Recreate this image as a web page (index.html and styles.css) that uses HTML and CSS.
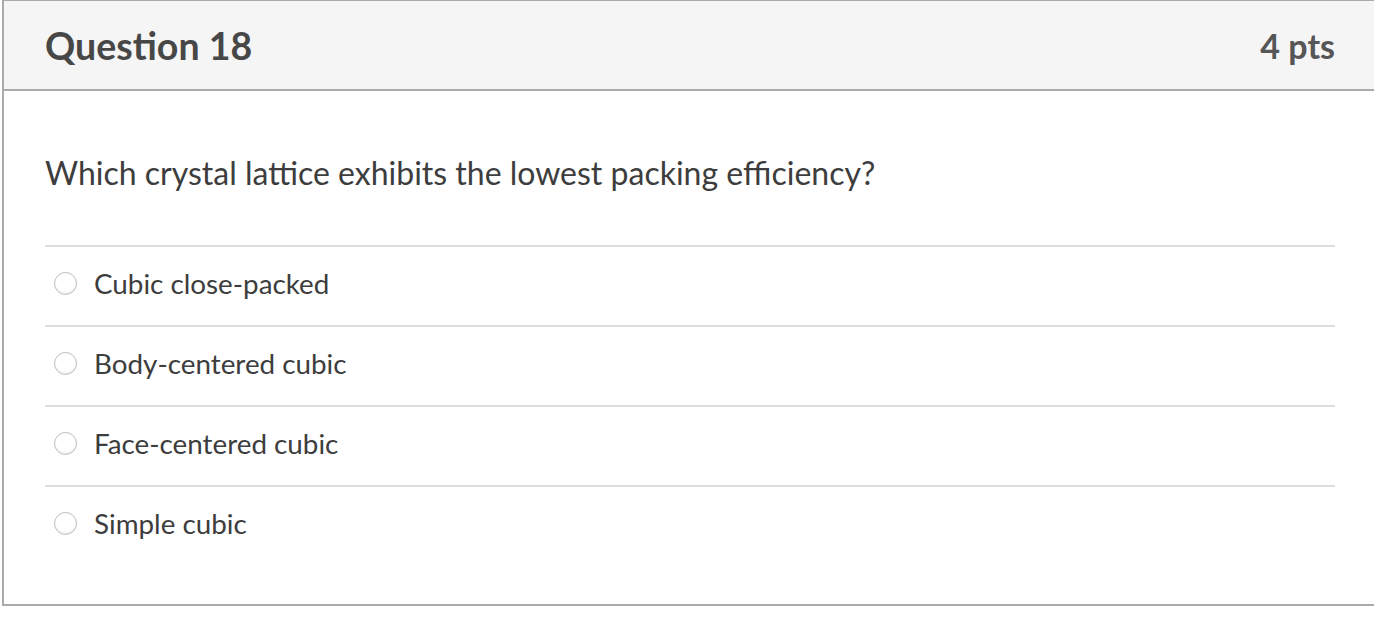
FILE: index.html
```html
<!DOCTYPE html>
<html>
<head>
<meta charset="utf-8">
<link rel="stylesheet" href="styles.css">
</head>
<body>
<div class="question">
  <div class="q-header">
    <span class="q-title">Question 18</span>
    <span class="q-points">4 pts</span>
  </div>
  <div class="q-body">
    <div class="q-text">Which crystal lattice exhibits the lowest packing efficiency?</div>
    <div class="answers">
      <label class="answer"><span class="radio"></span><span class="a-text">Cubic close-packed</span></label>
      <label class="answer"><span class="radio"></span><span class="a-text">Body-centered cubic</span></label>
      <label class="answer"><span class="radio"></span><span class="a-text">Face-centered cubic</span></label>
      <label class="answer"><span class="radio"></span><span class="a-text">Simple cubic</span></label>
    </div>
  </div>
</div>
</body>
</html>
```

FILE: styles.css
```css
html, body {
  margin: 0;
  padding: 0;
  overflow: hidden;
  background: #ffffff;
}
body {
  font-family: Lato, "Liberation Sans", sans-serif;
  color: #3d3d3d;
}
.question {
  margin-left: 2px;
  width: 1400px;
  border: 2px solid #aaaaaa;
  border-top-width: 1px;
  border-right: none;
}
.q-header {
  display: flex;
  justify-content: space-between;
  align-items: center;
  background: #f5f5f5;
  border-bottom: 2px solid #aaaaaa;
  padding: 0 43px 0 41px;
  box-sizing: border-box;
  width: 1374px;
  height: 90px;
}
.q-title {
  font-size: 37.5px;
  font-weight: 700;
  color: #474747;
}
.q-points {
  font-size: 34px;
  font-weight: 700;
  color: #565656;
}
.q-body {
  width: 1374px;
  box-sizing: border-box;
  padding: 0 43px 39px 41px;
}
.q-text {
  font-size: 32px;
  padding-top: 60px;
  padding-bottom: 50px;
  line-height: 44px;
  color: #3d3d3d;
}
.answers {
  display: flex;
  flex-direction: column;
}
.answer {
  display: flex;
  align-items: center;
  gap: 17px;
  height: 80px;
  box-sizing: border-box;
  border-top: 2px solid #dddddd;
  padding-left: 9px;
  padding-bottom: 5px;
}
.radio {
  width: 21px;
  height: 21px;
  border-radius: 50%;
  border: 1px solid #bdbdbd;
  background: radial-gradient(circle at 50% 35%, #ffffff 55%, #ededed 100%);
  box-shadow: inset 0 -1px 1px rgba(0, 0, 0, 0.04);
  flex: none;
}
.a-text {
  font-size: 27.8px;
  color: #3d3d3d;
}
```
